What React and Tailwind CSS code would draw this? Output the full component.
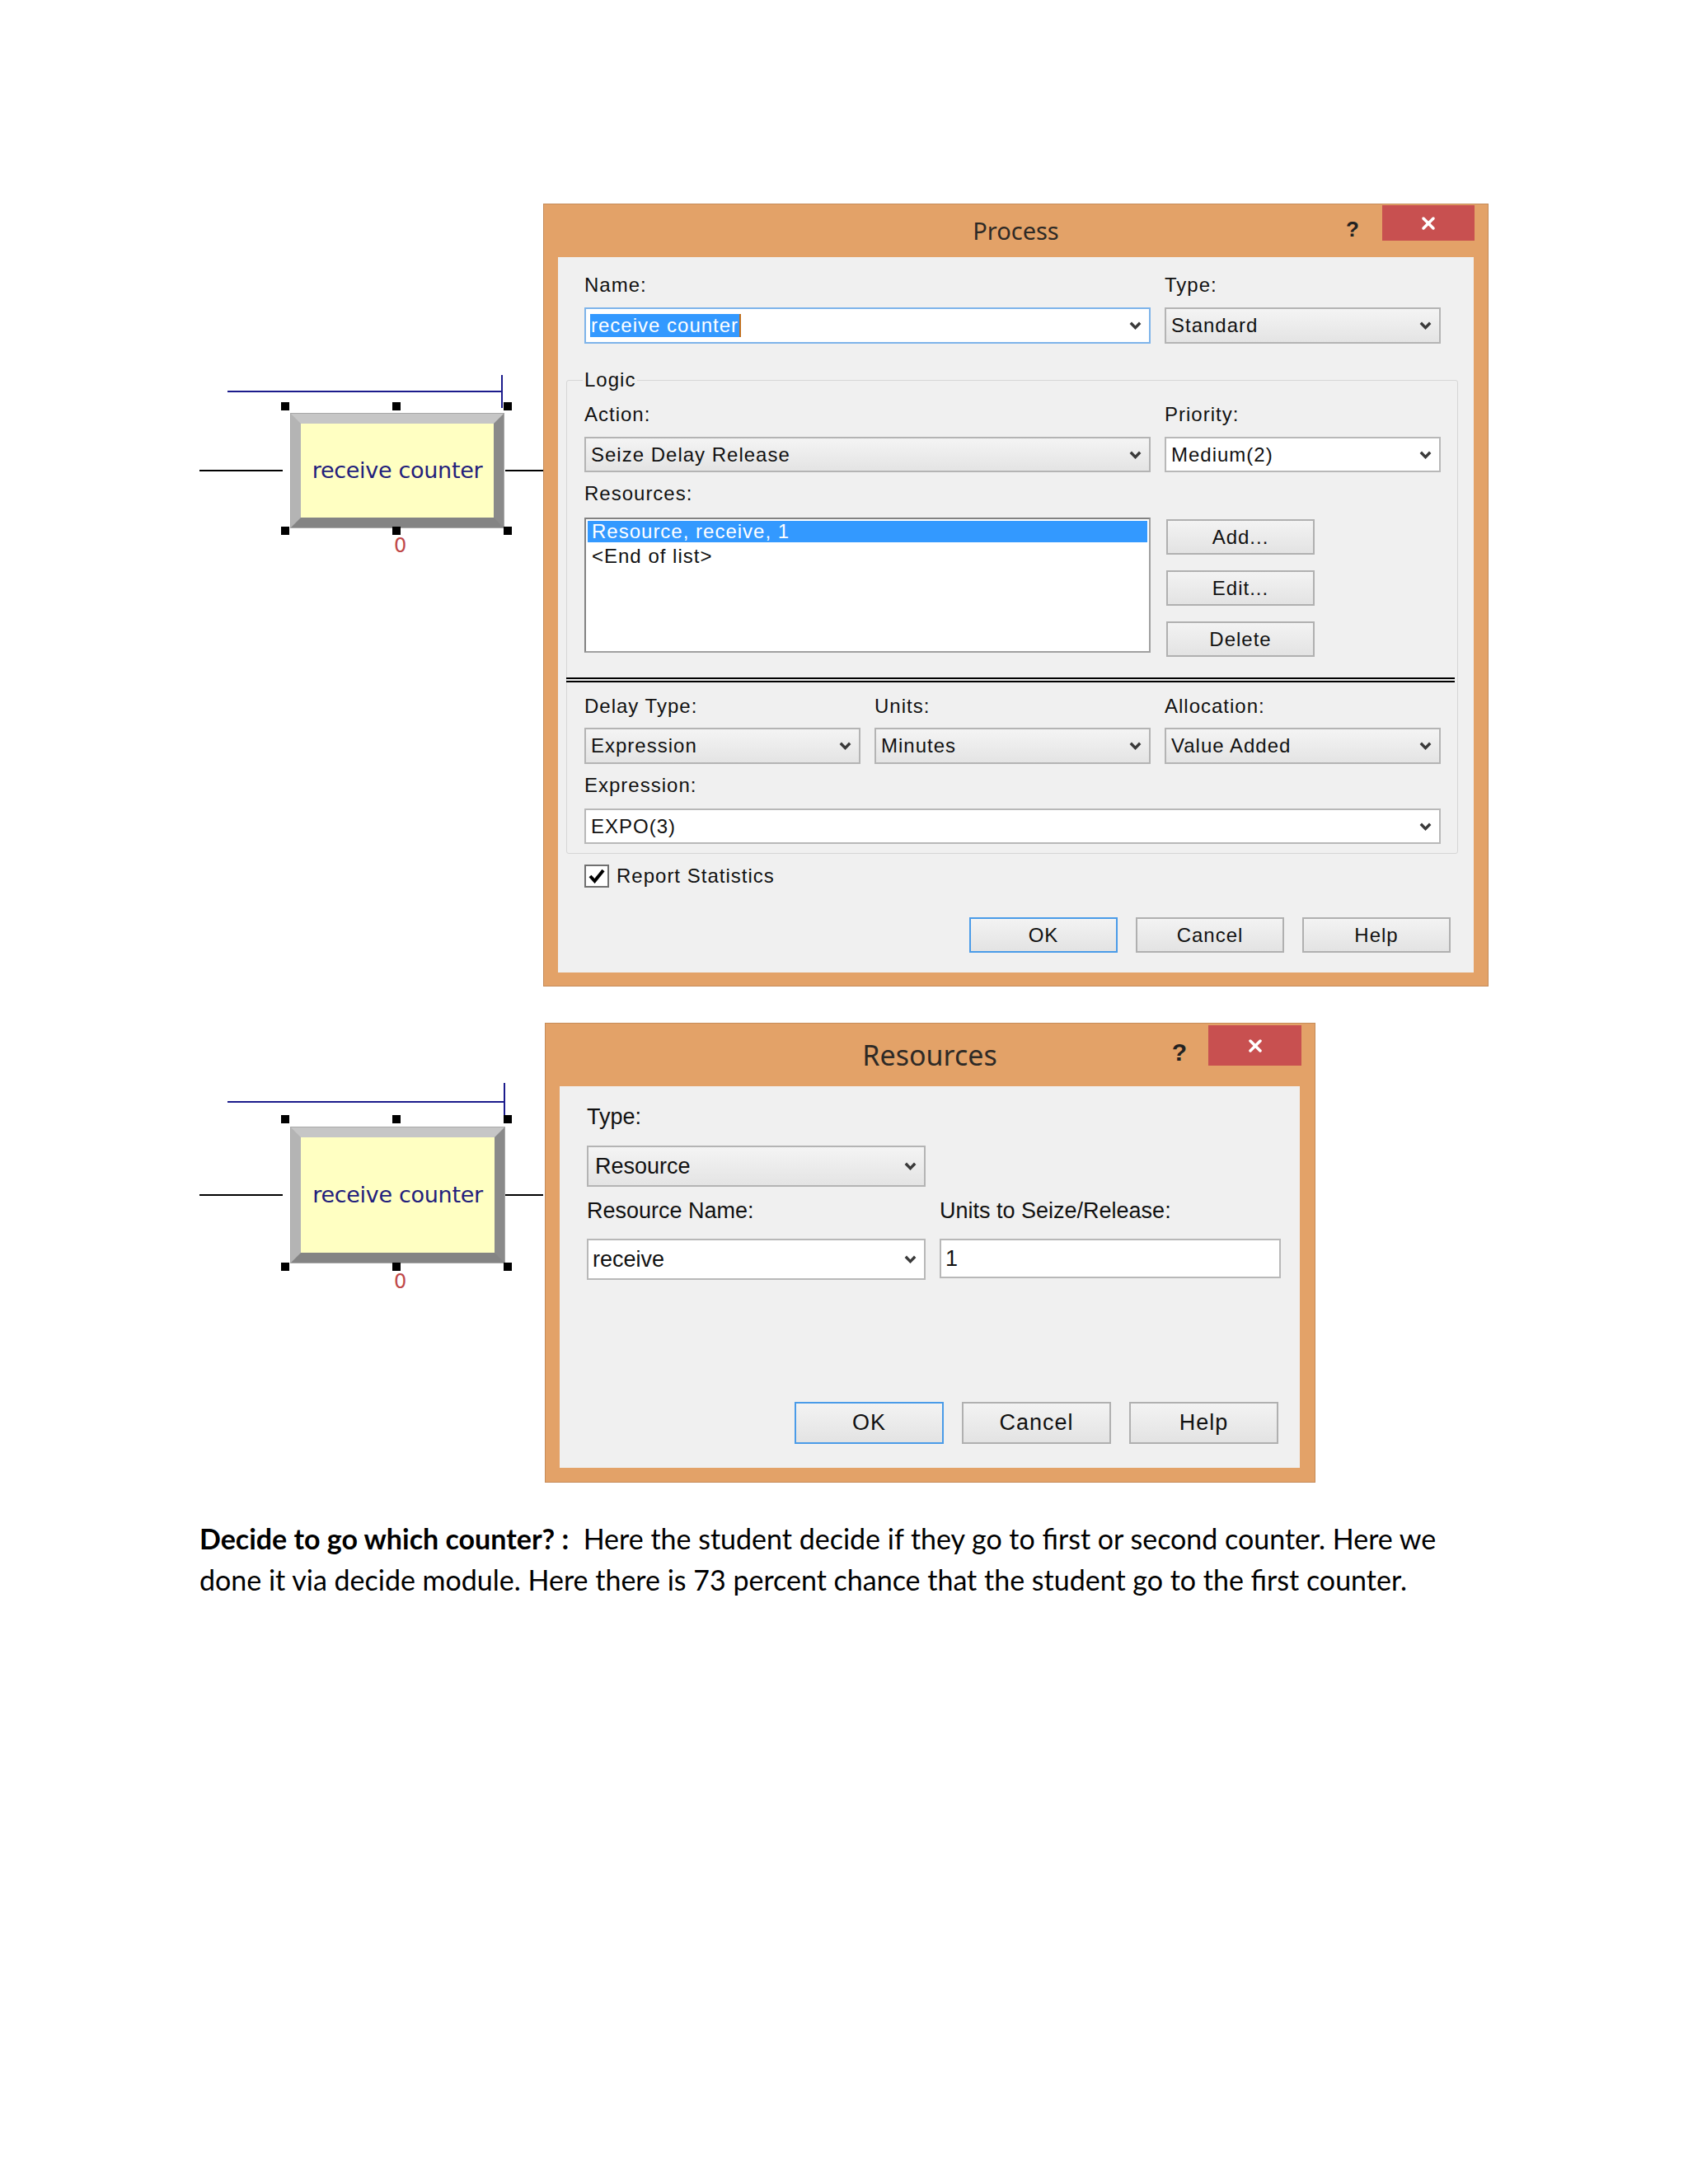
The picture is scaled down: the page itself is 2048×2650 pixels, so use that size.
import { X } from 'lucide-react'

const ui = "font-['Liberation_Sans',Arial,sans-serif]"

function Chevron() {
  return (
    <svg width="15" height="10" viewBox="0 0 15 10" className="shrink-0">
      <path d="M1.8 1.8 L7.5 7.6 L13.2 1.8" fill="none" stroke="#3a3a3a" strokeWidth="3.4" />
    </svg>
  )
}

function Label({ children, className = '' }) {
  return <div className={`h-[24px] text-[24px] leading-[24px] tracking-[1px] text-[#111] ${className}`}>{children}</div>
}

function Select({ children, white = false, className = '' }) {
  return (
    <div
      className={`flex items-center justify-between border-2 pl-[6px] pr-[9px] text-[24px] tracking-[1px] text-[#111] ${
        white ? 'bg-white border-[#b8b8b8]' : 'bg-linear-to-b from-[#f4f4f4] to-[#e4e4e4] border-[#b4b4b4]'
      } ${className}`}
    >
      <span>{children}</span>
      <Chevron />
    </div>
  )
}

function Button({ children, primary = false, className = '' }) {
  return (
    <div
      className={`flex items-center justify-center border-2 bg-linear-to-b from-[#f3f3f3] to-[#e3e3e3] tracking-[1px] text-[#111] ${
        primary ? 'border-[#4a9be8]' : 'border-[#b0b0b0]'
      } ${className}`}
    >
      {children}
    </div>
  )
}

function TitleBar({ title, className, titleClass, helpClass, closeClass }) {
  return (
    <div className={`relative flex items-center justify-center ${className}`}>
      <span className={`font-['Noto_Sans',sans-serif] text-[#2e2a26] ${titleClass}`}>{title}</span>
      <span className={`absolute font-['Liberation_Sans',sans-serif] font-bold text-[#222] ${helpClass}`}>?</span>
      <div className={`absolute flex items-center justify-center bg-[#c85050] ${closeClass}`}>
        <X className="text-white" size={24} strokeWidth={3.5} />
      </div>
    </div>
  )
}

// Arena-style process module with its selection handles
function Module({ c }) {
  const handle = 'absolute w-[10px] h-[10px] bg-black'
  return (
    <div className={`relative shrink-0 ${c.wrap}`}>
      <div className={`absolute left-[34px] h-[2px] bg-[#1c1c8c] ${c.hLine}`} />
      <div className={`absolute w-[2px] bg-[#1c1c8c] ${c.vLine}`} />
      <div className={`absolute left-0 w-[101px] h-[2px] bg-black ${c.lines}`} />
      <div className={`absolute left-[371px] w-[46px] h-[2px] bg-black ${c.lines}`} />
      <div className={`absolute left-[110px] flex border border-[#a8a8a8] ${c.box}`}>
        <div className="flex flex-1 items-center justify-center border-t-[12px] border-l-[12px] border-r-[12px] border-b-[12px] border-t-[#c6c6c6] border-l-[#b4b4b4] border-r-[#8a8a8a] border-b-[#848484] bg-[#ffffc2]">
          <span className="font-['DejaVu_Sans',sans-serif] text-[27px] tracking-[-0.3px] text-[#22207c]">receive counter</span>
        </div>
      </div>
      <div className={`${handle} left-[99px] ${c.top}`} />
      <div className={`${handle} left-[234px] ${c.top}`} />
      <div className={`${handle} left-[369px] ${c.top}`} />
      <div className={`${handle} left-[99px] ${c.bottom}`} />
      <div className={`${handle} left-[234px] ${c.bottom}`} />
      <div className={`${handle} left-[369px] ${c.bottom}`} />
      <span className={`absolute left-[236px] font-['DejaVu_Sans',sans-serif] text-[24px] leading-[22px] text-[#c04848] ${c.zero}`}>0</span>
    </div>
  )
}

function ProcessDialog() {
  return (
    <div className={`w-[1147px] border border-[#c58b58] bg-[#e3a268] px-[17px] pb-[16px] ${ui}`}>
      <TitleBar
        title="Process"
        className="h-[64px]"
        titleClass="text-[29px]"
        helpClass="right-[139px] top-[11px] text-[26px]"
        closeClass="-right-[1px] top-[1px] w-[112px] h-[43px]"
      />
      <div className="bg-[#f0f0f0] pt-[22px] pl-[10px] pr-[19px] pb-[24px]">
        <div className="mx-[22px] mr-[21px] grid grid-cols-[335px_335px_335px] gap-x-[17px]">
          <Label className="col-span-2">Name:</Label>
          <Label>Type:</Label>
          <div className="col-span-2 mt-[15px] flex h-[44px] items-center justify-between border-2 border-[#7eb4ea] bg-white pl-[5px] pr-[9px] text-[24px] tracking-[1px]">
            <span className="bg-[#3399ff] px-[1px] leading-[28px] text-white border-r-2 border-[#c07020]">receive counter</span>
            <Chevron />
          </div>
          <Select className="mt-[15px] h-[44px]">Standard</Select>
        </div>

        <div className="relative mt-[44px] rounded-[3px] border border-[#d6d6d6] pt-[29px] pl-[21px] pr-[20px] pb-[11px]">
          <span className="absolute left-[19px] -top-[13px] bg-[#f0f0f0] px-[2px] text-[24px] leading-[24px] tracking-[1px] text-[#111]">Logic</span>
          <div className="grid grid-cols-[335px_335px_335px] gap-x-[17px]">
            <Label className="col-span-2">Action:</Label>
            <Label>Priority:</Label>
            <Select className="col-span-2 mt-[15px] h-[43px]">Seize Delay Release</Select>
            <Select white className="mt-[15px] h-[43px]">Medium(2)</Select>
          </div>
          <Label className="mt-[14px]">Resources:</Label>
          <div className="mt-[17px] flex h-[164px] items-start">
            <div className="h-[164px] w-[687px] border-2 border-[#a0a0a0] border-t-[#828282] border-l-[#828282] bg-white p-[2px] text-[24px] tracking-[1px]">
              <div className="h-[26px] bg-[#3399ff] pl-[5px] leading-[26px] text-white">Resource, receive, 1</div>
              <div className="mt-[4px] h-[26px] pl-[5px] leading-[26px] text-[#111]">&lt;End of list&gt;</div>
            </div>
            <div className="ml-[19px] flex flex-col gap-[19px] pt-[2px] text-[24px]">
              <Button className="h-[43px] w-[180px]">Add...</Button>
              <Button className="h-[43px] w-[180px]">Edit...</Button>
              <Button className="h-[43px] w-[180px]">Delete</Button>
            </div>
          </div>
          <div className="mt-[30px] -ml-[22px] -mr-[17px] h-[6px] border-y-2 border-black" />
          <div className="grid grid-cols-[335px_335px_335px] gap-x-[17px]">
            <Label className="mt-[17px]">Delay Type:</Label>
            <Label className="mt-[17px]">Units:</Label>
            <Label className="mt-[17px]">Allocation:</Label>
            <Select className="mt-[14px] h-[44px]">Expression</Select>
            <Select className="mt-[14px] h-[44px]">Minutes</Select>
            <Select className="mt-[14px] h-[44px]">Value Added</Select>
          </div>
          <Label className="mt-[14px]">Expression:</Label>
          <Select white className="mt-[16px] h-[43px]">EXPO(3)</Select>
        </div>

        <div className="mt-[13px] ml-[22px] flex h-[28px] items-center gap-[9px]">
          <div className="flex h-[28px] w-[30px] items-center justify-center border-2 border-[#707070] bg-white">
            <svg width="20" height="18" viewBox="0 0 20 18">
              <path d="M2 9 L7.5 15 L18 2" fill="none" stroke="#000" strokeWidth="4" />
            </svg>
          </div>
          <span className="text-[24px] leading-[24px] tracking-[1px] text-[#111]">Report Statistics</span>
        </div>

        <div className="mt-[36px] flex justify-end gap-[22px] pr-[9px] text-[24px]">
          <Button primary className="h-[43px] w-[180px]">OK</Button>
          <Button className="h-[43px] w-[180px]">Cancel</Button>
          <Button className="h-[43px] w-[180px]">Help</Button>
        </div>
      </div>
    </div>
  )
}

function ResourcesDialog() {
  const label = 'h-[28px] text-[27px] leading-[28px] text-[#111]'
  return (
    <div className={`w-[935px] border border-[#c58b58] bg-[#e3a268] pl-[17px] pr-[18px] pb-[17px] ${ui}`}>
      <TitleBar
        title="Resources"
        className="h-[76px]"
        titleClass="text-[34px]"
        helpClass="right-[137px] top-[12px] text-[30px]"
        closeClass="-right-[2px] top-[2px] w-[113px] h-[49px]"
      />
      <div className="bg-[#f0f0f0] pt-[23px] px-[33px] pr-[23px] pb-[29px]">
        <div className={label}>Type:</div>
        <div className="mt-[21px] flex h-[50px] w-[411px] items-center justify-between border-2 border-[#b4b4b4] bg-linear-to-b from-[#f4f4f4] to-[#e4e4e4] pl-[8px] pr-[9px] text-[27px] text-[#111]">
          <span>Resource</span>
          <Chevron />
        </div>
        <div className="grid grid-cols-[411px_414px] gap-x-[17px]">
          <div className={`mt-[15px] ${label}`}>Resource Name:</div>
          <div className={`mt-[15px] ${label}`}>Units to Seize/Release:</div>
          <div className="mt-[20px] flex h-[50px] items-center justify-between border-2 border-[#b8b8b8] bg-white pl-[5px] pr-[9px] text-[27px] text-[#111]">
            <span>receive</span>
            <Chevron />
          </div>
          <div className="mt-[20px] flex h-[48px] items-center border-2 border-[#b8b8b8] bg-white pl-[5px] text-[27px] text-[#111]">1</div>
        </div>
        <div className="mt-[148px] flex justify-end gap-[22px] pr-[3px] text-[27px]">
          <Button primary className="h-[51px] w-[181px]">OK</Button>
          <Button className="h-[51px] w-[181px]">Cancel</Button>
          <Button className="h-[51px] w-[181px]">Help</Button>
        </div>
      </div>
    </div>
  )
}

const firstModule = {
  wrap: 'w-[417px] h-[440px]',
  hLine: 'top-[227px] w-[334px]',
  vLine: 'left-[366px] top-[208px] h-[40px]',
  lines: 'top-[323px]',
  box: 'top-[254px] w-[260px] h-[140px]',
  top: 'top-[241px]',
  bottom: 'top-[392px]',
  zero: 'top-[404px]',
}

const secondModule = {
  wrap: 'w-[419px] h-[340px]',
  hLine: 'top-[95px] w-[336px]',
  vLine: 'left-[369px] top-[73px] h-[47px]',
  lines: 'top-[208px]',
  box: 'top-[126px] w-[261px] h-[166px]',
  top: 'top-[112px]',
  bottom: 'top-[291px]',
  zero: 'top-[303px]',
}

export default function App() {
  return (
    <div className="min-h-[2650px] w-[2048px] bg-white pl-[242px] pt-[247px]">
      <div className="flex items-start">
        <Module c={firstModule} />
        <ProcessDialog />
      </div>
      <div className="mt-[44px] flex items-start">
        <Module c={secondModule} />
        <ResourcesDialog />
      </div>
      <p className="mt-[43px] w-[1600px] font-['Lato',sans-serif] text-[34px] leading-[50px] text-black">
        <b>Decide to go which counter? :</b>&nbsp; Here the student decide if they go to first or second counter. Here we
        <br />
        done it via decide module. Here there is 73 percent chance that the student go to the first counter.
      </p>
    </div>
  )
}
